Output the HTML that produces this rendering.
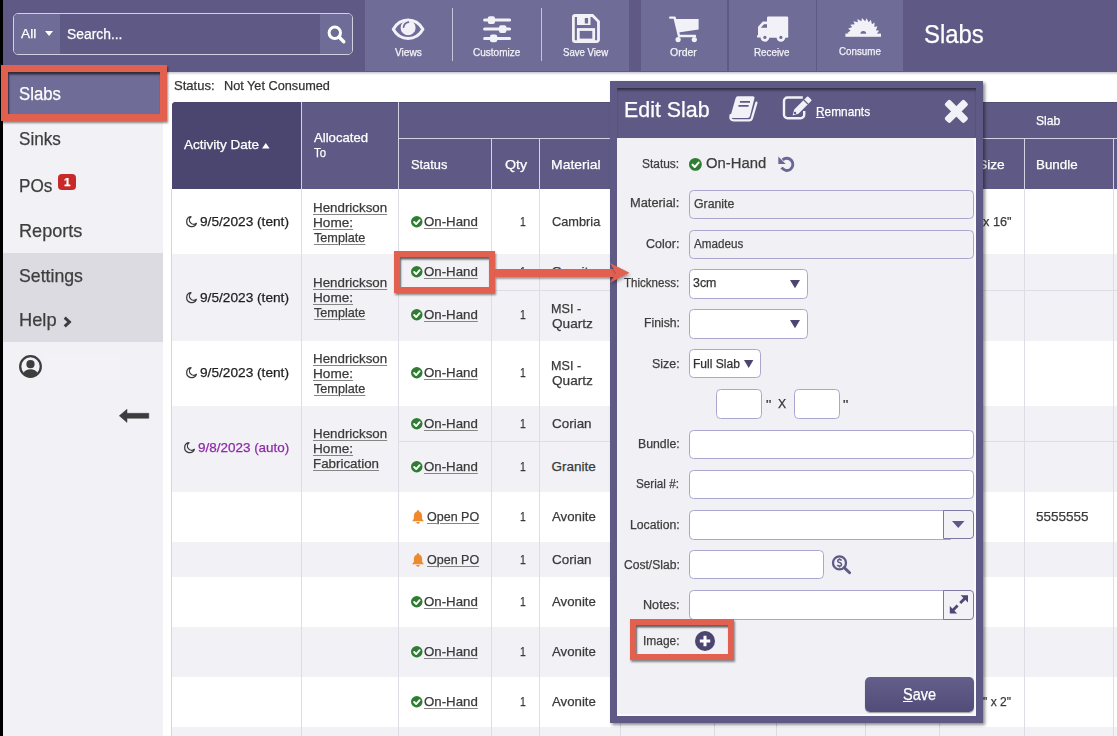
<!DOCTYPE html>
<html><head><meta charset="utf-8">
<style>
*{box-sizing:border-box}
html,body{margin:0;padding:0}
body{width:1117px;height:736px;overflow:hidden;position:relative;background:#fff;font-family:"Liberation Sans",sans-serif;color:#3a3a3a}
.a{position:absolute}
.t{white-space:nowrap;line-height:1;transform-origin:0 0}
svg{display:block;overflow:visible}
.lk{text-decoration:underline;text-underline-offset:2px;text-decoration-thickness:1.4px;text-decoration-color:#858585}
.t{-webkit-text-stroke:0.25px currentColor}
.hl{box-shadow:0.5px 2px 2px rgba(0,0,0,.45),inset 1px 2.5px 2px rgba(0,0,0,.6)}
.inp{border:1.5px solid #aaa7cf;border-radius:4px;background:#fff}
.dis{background:#efeef3}
</style></head>
<body>
<div class="a" style="left:0px;top:71px;width:1117px;height:4px;background:linear-gradient(rgba(40,38,70,.35),rgba(40,38,70,0));"></div>
<div class="a" style="left:0px;top:0px;width:1117px;height:71.5px;background:#5e5a85;"></div>
<div class="a" style="left:13px;top:13px;width:340px;height:42px;border:1.6px solid #d2d0e2;border-radius:5px;overflow:hidden;background:#5e5a85"><div class="a" style="left:0;top:0;width:45.5px;height:40px;background:#6f6c97"></div><div class="a" style="left:305.5px;top:0;width:34px;height:40px;background:#6f6c97"></div></div>
<div class="a t" style="left:20.67px;top:27.19px;font-size:13px;color:#fff;transform:scaleX(1.055);">All</div>
<svg class="a" style="left:44.6px;top:30.8px;" width="8.1" height="5" viewBox="0 0 8 5"><path d="M0 0H8L4 5Z" fill="#fff"/></svg>
<div class="a t" style="left:67.17px;top:27.45px;font-size:14.7px;color:#fff;transform:scaleX(0.943);">Search...</div>
<svg class="a" style="left:326.5px;top:24.8px;" width="19" height="19" viewBox="0 0 19 19"><circle cx="7.8" cy="7.8" r="5.7" fill="none" stroke="#fff" stroke-width="3"/><path d="M12 12L16.8 16.8" stroke="#fff" stroke-width="3.4" stroke-linecap="round"/></svg>
<div class="a" style="left:365px;top:0px;width:264px;height:71px;background:#6f6c97;"></div>
<div class="a" style="left:452px;top:8px;width:1px;height:53px;background:#c5c3da;"></div>
<div class="a" style="left:541px;top:8px;width:1px;height:53px;background:#c5c3da;"></div>
<svg class="a" style="left:386px;top:12px;" width="44" height="34" viewBox="0 0 44 34"><path d="M7.3 17.2C11 10.3 16 7.9 22.1 7.9S33.2 10.3 36.9 17.2C33.2 24.1 28.2 26.4 22.1 26.4S11 24.1 7.3 17.2Z" fill="none" stroke="#f2f1f7" stroke-width="3" stroke-linejoin="round"/><circle cx="22.1" cy="15.7" r="7.5" fill="#f2f1f7"/><path d="M17.6 15.2Q17.9 11.2 22.5 10.2" stroke="#6f6c97" stroke-width="1.7" fill="none" stroke-linecap="round"/></svg>
<div class="a t" style="left:394.66px;top:47.76px;font-size:10.2px;color:#f3f2f8;transform:scaleX(0.993);">Views</div>
<svg class="a" style="left:476px;top:10px;" width="44" height="36" viewBox="0 0 44 36"><g stroke="#f2f1f7" stroke-width="3" stroke-linecap="round"><path d="M8.6 10H33.6M8.6 19.1H33.6M8.6 28.4H33.6"/></g><g fill="#f2f1f7"><rect x="11.8" y="6.3" width="7.2" height="7.6" rx="2"/><rect x="23" y="15.3" width="7.4" height="7.6" rx="2"/><rect x="14" y="24.6" width="7.2" height="7.6" rx="2"/></g></svg>
<div class="a t" style="left:473.09px;top:47.76px;font-size:10.2px;color:#f3f2f8;transform:scaleX(0.983);">Customize</div>
<svg class="a" style="left:572px;top:13.5px;" width="28" height="29" viewBox="0 0 28 29"><path d="M3.2 1.5H20.5L26.5 7.5V25.8A1.8 1.8 0 0 1 24.7 27.6H3.2A1.8 1.8 0 0 1 1.4 25.8V3.3A1.8 1.8 0 0 1 3.2 1.5Z" fill="none" stroke="#f2f1f7" stroke-width="2.8"/><rect x="5" y="2.5" width="13.5" height="8.5" fill="#f2f1f7"/><rect x="12.8" y="4" width="3.3" height="5.5" fill="#6f6c97"/><rect x="6.3" y="15.5" width="15.4" height="10.5" fill="none" stroke="#f2f1f7" stroke-width="2.8"/></svg>
<div class="a t" style="left:562.96px;top:47.76px;font-size:10.2px;color:#f3f2f8;transform:scaleX(0.940);">Save View</div>
<div class="a" style="left:641px;top:0px;width:86px;height:71px;background:#6f6c97;"></div>
<div class="a" style="left:729px;top:0px;width:87px;height:71px;background:#6f6c97;"></div>
<div class="a" style="left:817px;top:0px;width:86px;height:71px;background:#6f6c97;"></div>
<svg class="a" style="left:664px;top:12px;" width="40" height="34" viewBox="0 0 40 34"><path d="M6.2 5.6H10.6L15 24H31" fill="none" stroke="#f2f1f7" stroke-width="2.4" stroke-linecap="round" stroke-linejoin="round"/><path d="M11.2 7H34.6V17.4L14.4 20.4Z" fill="#f2f1f7"/><circle cx="14.1" cy="27.6" r="2.6" fill="#f2f1f7"/><circle cx="30.3" cy="27.6" r="2.6" fill="#f2f1f7"/></svg>
<div class="a t" style="left:670.30px;top:47.76px;font-size:10.2px;color:#f3f2f8;transform:scaleX(1.031);">Order</div>
<svg class="a" style="left:752px;top:12px;" width="40" height="34" viewBox="0 0 40 34"><rect x="15" y="4.4" width="21.2" height="21" rx="1.2" fill="#f2f1f7"/><path d="M6 14.8L10.8 9.5H16V25H6Z" fill="#f2f1f7"/><rect x="5" y="23" width="31.2" height="2.6" rx="1.2" fill="#f2f1f7"/><path d="M8.8 15.8L12 12.2H15V15.8Z" fill="#6f6c97"/><circle cx="12.9" cy="25.4" r="4.3" fill="#f2f1f7"/><circle cx="28.9" cy="25.4" r="4.3" fill="#f2f1f7"/><circle cx="12.9" cy="25.4" r="1.6" fill="#6f6c97"/><circle cx="28.9" cy="25.4" r="1.6" fill="#6f6c97"/></svg>
<div class="a t" style="left:754.00px;top:47.76px;font-size:10.2px;color:#f3f2f8;transform:scaleX(0.962);">Receive</div>
<svg class="a" style="left:838px;top:12px;" width="50" height="30" viewBox="0 0 50 30"><path d="M12.10 22.20 L9.13 21.28 L12.63 18.48 L10.04 16.76 L14.20 15.06 L12.19 12.68 L16.66 12.22 L15.41 9.37 L19.82 10.19 L19.42 7.10 L23.42 9.13 L23.91 6.06 L27.18 9.13 L28.52 6.32 L30.78 10.19 L32.86 7.87 L33.94 12.22 L36.59 10.58 L36.40 15.06 L39.41 14.23 L37.97 18.48 L41.08 18.53 L38.50 22.20Z" fill="#f2f1f7"/><rect x="7.4" y="21.6" width="35.6" height="3.2" fill="#f2f1f7"/><path d="M22.4 21.8A2.9 2.9 0 0 1 28.2 21.8Z" fill="#6f6c97"/></svg>
<div class="a t" style="left:838.50px;top:47.36px;font-size:10.2px;color:#f3f2f8;transform:scaleX(0.961);">Consume</div>
<div class="a t" style="left:924.42px;top:21.49px;font-size:26px;color:#fff;transform:scaleX(0.919);">Slabs</div>
<div class="a" style="left:3px;top:71px;width:160px;height:665px;background:#f2f1f6;"></div>
<div class="a" style="left:3px;top:253px;width:160px;height:89px;background:#dcdbe2;"></div>
<div class="a" style="left:0px;top:0px;width:3px;height:736px;background:#000;"></div>
<div class="a hl" style="left:1px;top:65.2px;width:166px;height:56px;border:7px solid #e2604f;background:#6f6c97"></div>
<div class="a t" style="left:18.84px;top:85.48px;font-size:18.8px;color:#fff;transform:scaleX(0.892);">Slabs</div>
<div class="a t" style="left:19.02px;top:130.44px;font-size:18.5px;color:#3d3d3d;transform:scaleX(0.924);">Sinks</div>
<div class="a t" style="left:19.29px;top:176.64px;font-size:18.5px;color:#3d3d3d;transform:scaleX(0.926);">POs</div>
<div class="a" style="left:58px;top:173.6px;width:18px;height:16.3px;background:#c82a2a;border-radius:4px"></div>
<div class="a t" style="left:63.62px;top:177.41px;font-size:10.5px;color:#fff;transform:scaleX(1.104);font-weight:bold">1</div>
<div class="a t" style="left:18.71px;top:221.74px;font-size:18.5px;color:#3d3d3d;transform:scaleX(0.979);">Reports</div>
<div class="a t" style="left:19.20px;top:267.34px;font-size:18.5px;color:#3d3d3d;transform:scaleX(0.957);">Settings</div>
<div class="a t" style="left:18.70px;top:310.94px;font-size:18.5px;color:#3d3d3d;transform:scaleX(0.987);">Help</div>
<svg class="a" style="left:62.6px;top:315.8px;" width="9" height="12" viewBox="0 0 9 12"><path d="M1.7 1.6L6.4 6L1.7 10.4" fill="none" stroke="#3d3d3d" stroke-width="3"/></svg>
<div class="a" style="left:45px;top:354.4px;width:75px;height:23.6px;background:#f3f2f7;"></div>
<svg class="a" style="left:18.6px;top:354.8px;" width="23" height="23" viewBox="0 0 23 23"><circle cx="11.5" cy="11.5" r="10.3" fill="none" stroke="#3d3d3d" stroke-width="2.3"/><circle cx="11.5" cy="9.2" r="4.1" fill="#3d3d3d"/><path d="M4.3 18.6C5.6 15.4 8.2 14.3 11.5 14.3S17.4 15.4 18.7 18.6A10.2 10.2 0 0 1 4.3 18.6Z" fill="#3d3d3d"/></svg>
<svg class="a" style="left:118.5px;top:409.3px;" width="30" height="13.6" viewBox="0 0 30 13.6"><path d="M0.3 6.8L8 0.2V4.3H29.8V9.3H8V13.4Z" fill="#3d3d3d" stroke="#3d3d3d" stroke-width="0.5" stroke-linejoin="round"/></svg>
<div class="a t" style="left:174.01px;top:79.04px;font-size:13.3px;color:#333;transform:scaleX(0.980);">Status:</div>
<div class="a t" style="left:224.06px;top:79.04px;font-size:13.3px;color:#333;transform:scaleX(0.955);">Not Yet Consumed</div>
<div class="a" style="left:171px;top:189px;width:946px;height:547px;background:#fff;border-left:1px solid #d6d5de"></div>
<div class="a" style="left:172px;top:254px;width:945px;height:87px;background:#f2f1f6;"></div>
<div class="a" style="left:172px;top:406px;width:945px;height:86px;background:#f2f1f6;"></div>
<div class="a" style="left:172px;top:542px;width:945px;height:35px;background:#f2f1f6;"></div>
<div class="a" style="left:172px;top:627px;width:945px;height:50px;background:#f2f1f6;"></div>
<div class="a" style="left:172px;top:727px;width:945px;height:9px;background:#f2f1f6;"></div>
<div class="a" style="left:399px;top:290px;width:718px;height:1px;background:#dedde6;"></div>
<div class="a" style="left:399px;top:441px;width:718px;height:1px;background:#dedde6;"></div>
<div class="a" style="left:301px;top:189px;width:1px;height:547px;background:#dedde6;"></div>
<div class="a" style="left:398px;top:189px;width:1px;height:547px;background:#dedde6;"></div>
<div class="a" style="left:491px;top:189px;width:1px;height:547px;background:#dedde6;"></div>
<div class="a" style="left:539px;top:189px;width:1px;height:547px;background:#dedde6;"></div>
<div class="a" style="left:620px;top:189px;width:1px;height:547px;background:#dedde6;"></div>
<div class="a" style="left:714px;top:189px;width:1px;height:547px;background:#dedde6;"></div>
<div class="a" style="left:776px;top:189px;width:1px;height:547px;background:#dedde6;"></div>
<div class="a" style="left:865px;top:189px;width:1px;height:547px;background:#dedde6;"></div>
<div class="a" style="left:939px;top:189px;width:1px;height:547px;background:#dedde6;"></div>
<div class="a" style="left:1024px;top:189px;width:1px;height:547px;background:#dedde6;"></div>
<div class="a" style="left:1113px;top:189px;width:1px;height:547px;background:#dedde6;"></div>
<div class="a" style="left:172px;top:102px;width:945px;height:87px;background:#5e5a85;border-top-left-radius:3.5px;box-shadow:inset 0 1px 0 rgba(0,0,0,.12)"></div>
<div class="a" style="left:172px;top:102px;width:129px;height:87px;background:#4a466f;border-top-left-radius:4px"></div>
<div class="a" style="left:301px;top:102px;width:1px;height:87px;background:#d3d1e3;"></div>
<div class="a" style="left:398px;top:102px;width:1px;height:87px;background:#d3d1e3;"></div>
<div class="a" style="left:398px;top:138px;width:719px;height:1px;background:#d3d1e3;"></div>
<div class="a" style="left:491px;top:138px;width:1px;height:51px;background:#d3d1e3;"></div>
<div class="a" style="left:539px;top:138px;width:1px;height:51px;background:#d3d1e3;"></div>
<div class="a" style="left:1024px;top:138px;width:1px;height:51px;background:#d3d1e3;"></div>
<div class="a" style="left:1113px;top:138px;width:1px;height:51px;background:#d3d1e3;"></div>
<div class="a t" style="left:184.27px;top:138.49px;font-size:13px;color:#fff;transform:scaleX(1.040);">Activity Date</div>
<svg class="a" style="left:261.8px;top:142.9px;" width="7.6" height="5.4" viewBox="0 0 7.6 5.4"><path d="M0 5.4H7.6L3.8 0Z" fill="#fff"/></svg>
<div class="a t" style="left:314.27px;top:131.49px;font-size:13px;color:#fff;transform:scaleX(1.011);">Allocated</div>
<div class="a t" style="left:314.05px;top:146.19px;font-size:13px;color:#fff;transform:scaleX(0.872);">To</div>
<div class="a t" style="left:411.22px;top:157.79px;font-size:13px;color:#fff;transform:scaleX(0.986);">Status</div>
<div class="a t" style="left:504.62px;top:157.79px;font-size:13px;color:#fff;transform:scaleX(1.098);">Qty</div>
<div class="a t" style="left:551.05px;top:157.79px;font-size:13px;color:#fff;transform:scaleX(1.074);">Material</div>
<div class="a t" style="left:977.68px;top:157.59px;font-size:13px;color:#fff;transform:scaleX(1.057);">Size</div>
<div class="a t" style="left:1035.80px;top:157.59px;font-size:13px;color:#fff;transform:scaleX(1.027);">Bundle</div>
<div class="a t" style="left:1035.55px;top:114.29px;font-size:13px;color:#fff;transform:scaleX(0.936);">Slab</div>
<svg class="a" style="left:186px;top:216.4px;" width="11" height="11.2" viewBox="0 0 11 11.2"><path d="M5 0.7A5 5 0 1 0 10.4 7.3A4.1 4.1 0 0 1 5 0.7Z" fill="none" stroke="#3a3a3a" stroke-width="1.25" stroke-linejoin="round"/></svg>
<div class="a t" style="left:199.86px;top:215.37px;font-size:13.5px;color:#1e1e1e;transform:scaleX(1.013);">9/5/2023 (tent)</div>
<div class="a t" style="left:313.21px;top:200.57px;font-size:13.5px;color:#3a3a3a;transform:scaleX(0.988);"><span class="lk">Hendrickson</span></div>
<div class="a t" style="left:313.18px;top:215.57px;font-size:13.5px;color:#3a3a3a;transform:scaleX(1.007);"><span class="lk">Home:</span></div>
<div class="a t" style="left:314.02px;top:230.57px;font-size:13.5px;color:#3a3a3a;transform:scaleX(0.937);"><span class="lk">Template</span></div>
<svg class="a" style="left:411.35px;top:216.25px;" width="11.5" height="11.5" viewBox="0 0 11.5 11.5"><circle cx="5.75" cy="5.75" r="5.75" fill="#2f7d32"/><path d="M3.1625 6.0375000000000005L5.175 8.049999999999999L8.625 4.14" fill="none" stroke="#fff" stroke-width="1.8975000000000002" stroke-linecap="round" stroke-linejoin="round"/></svg>
<div class="a t" style="left:424.37px;top:215.37px;font-size:13.5px;color:#3a3a3a;transform:scaleX(0.982);"><span class="lk">On-Hand</span></div>
<div class="a t" style="left:520.20px;top:215.37px;font-size:13.5px;color:#3a3a3a;transform:scaleX(0.773);">1</div>
<div class="a t" style="left:551.55px;top:215.37px;font-size:13.5px;color:#3a3a3a;transform:scaleX(0.946);">Cambria</div>
<div class="a t" style="left:983.36px;top:215.37px;font-size:13.5px;color:#3a3a3a;transform:scaleX(0.943);">x 16&quot;</div>
<svg class="a" style="left:186px;top:291.59999999999997px;" width="11" height="11.2" viewBox="0 0 11 11.2"><path d="M5 0.7A5 5 0 1 0 10.4 7.3A4.1 4.1 0 0 1 5 0.7Z" fill="none" stroke="#3a3a3a" stroke-width="1.25" stroke-linejoin="round"/></svg>
<div class="a t" style="left:199.86px;top:290.57px;font-size:13.5px;color:#1e1e1e;transform:scaleX(1.013);">9/5/2023 (tent)</div>
<div class="a t" style="left:313.21px;top:276.07px;font-size:13.5px;color:#3a3a3a;transform:scaleX(0.988);"><span class="lk">Hendrickson</span></div>
<div class="a t" style="left:313.18px;top:291.07px;font-size:13.5px;color:#3a3a3a;transform:scaleX(1.007);"><span class="lk">Home:</span></div>
<div class="a t" style="left:314.02px;top:306.07px;font-size:13.5px;color:#3a3a3a;transform:scaleX(0.937);"><span class="lk">Template</span></div>
<svg class="a" style="left:411.35px;top:266.25px;" width="11.5" height="11.5" viewBox="0 0 11.5 11.5"><circle cx="5.75" cy="5.75" r="5.75" fill="#2f7d32"/><path d="M3.1625 6.0375000000000005L5.175 8.049999999999999L8.625 4.14" fill="none" stroke="#fff" stroke-width="1.8975000000000002" stroke-linecap="round" stroke-linejoin="round"/></svg>
<div class="a t" style="left:424.37px;top:265.37px;font-size:13.5px;color:#3a3a3a;transform:scaleX(0.982);"><span class="lk">On-Hand</span></div>
<div class="a t" style="left:520.20px;top:265.37px;font-size:13.5px;color:#3a3a3a;transform:scaleX(0.773);">1</div>
<div class="a t" style="left:551.52px;top:265.37px;font-size:13.5px;color:#3a3a3a;transform:scaleX(1.000);">Granite</div>
<svg class="a" style="left:411.35px;top:309.25px;" width="11.5" height="11.5" viewBox="0 0 11.5 11.5"><circle cx="5.75" cy="5.75" r="5.75" fill="#2f7d32"/><path d="M3.1625 6.0375000000000005L5.175 8.049999999999999L8.625 4.14" fill="none" stroke="#fff" stroke-width="1.8975000000000002" stroke-linecap="round" stroke-linejoin="round"/></svg>
<div class="a t" style="left:424.37px;top:308.37px;font-size:13.5px;color:#3a3a3a;transform:scaleX(0.982);"><span class="lk">On-Hand</span></div>
<div class="a t" style="left:520.20px;top:308.37px;font-size:13.5px;color:#3a3a3a;transform:scaleX(0.773);">1</div>
<div class="a t" style="left:551.17px;top:301.77px;font-size:13.5px;color:#3a3a3a;transform:scaleX(0.933);">MSI -</div>
<div class="a t" style="left:551.56px;top:317.17px;font-size:13.5px;color:#3a3a3a;transform:scaleX(1.008);">Quartz</div>
<svg class="a" style="left:186px;top:367.0px;" width="11" height="11.2" viewBox="0 0 11 11.2"><path d="M5 0.7A5 5 0 1 0 10.4 7.3A4.1 4.1 0 0 1 5 0.7Z" fill="none" stroke="#3a3a3a" stroke-width="1.25" stroke-linejoin="round"/></svg>
<div class="a t" style="left:199.86px;top:365.97px;font-size:13.5px;color:#1e1e1e;transform:scaleX(1.013);">9/5/2023 (tent)</div>
<div class="a t" style="left:313.21px;top:351.77px;font-size:13.5px;color:#3a3a3a;transform:scaleX(0.988);"><span class="lk">Hendrickson</span></div>
<div class="a t" style="left:313.18px;top:366.77px;font-size:13.5px;color:#3a3a3a;transform:scaleX(1.007);"><span class="lk">Home:</span></div>
<div class="a t" style="left:314.02px;top:381.77px;font-size:13.5px;color:#3a3a3a;transform:scaleX(0.937);"><span class="lk">Template</span></div>
<svg class="a" style="left:411.35px;top:366.75px;" width="11.5" height="11.5" viewBox="0 0 11.5 11.5"><circle cx="5.75" cy="5.75" r="5.75" fill="#2f7d32"/><path d="M3.1625 6.0375000000000005L5.175 8.049999999999999L8.625 4.14" fill="none" stroke="#fff" stroke-width="1.8975000000000002" stroke-linecap="round" stroke-linejoin="round"/></svg>
<div class="a t" style="left:424.37px;top:365.87px;font-size:13.5px;color:#3a3a3a;transform:scaleX(0.982);"><span class="lk">On-Hand</span></div>
<div class="a t" style="left:520.20px;top:365.87px;font-size:13.5px;color:#3a3a3a;transform:scaleX(0.773);">1</div>
<div class="a t" style="left:551.17px;top:358.67px;font-size:13.5px;color:#3a3a3a;transform:scaleX(0.933);">MSI -</div>
<div class="a t" style="left:551.56px;top:373.87px;font-size:13.5px;color:#3a3a3a;transform:scaleX(1.008);">Quartz</div>
<svg class="a" style="left:184.3px;top:442.4px;" width="11" height="11.2" viewBox="0 0 11 11.2"><path d="M5 0.7A5 5 0 1 0 10.4 7.3A4.1 4.1 0 0 1 5 0.7Z" fill="none" stroke="#3a3a3a" stroke-width="1.25" stroke-linejoin="round"/></svg>
<div class="a t" style="left:197.77px;top:441.37px;font-size:13.5px;color:#8e2aa8;transform:scaleX(0.997);">9/8/2023 (auto)</div>
<div class="a t" style="left:313.21px;top:426.87px;font-size:13.5px;color:#3a3a3a;transform:scaleX(0.988);"><span class="lk">Hendrickson</span></div>
<div class="a t" style="left:313.18px;top:441.87px;font-size:13.5px;color:#3a3a3a;transform:scaleX(1.007);"><span class="lk">Home:</span></div>
<div class="a t" style="left:313.21px;top:456.87px;font-size:13.5px;color:#3a3a3a;transform:scaleX(0.988);"><span class="lk">Fabrication</span></div>
<svg class="a" style="left:411.35px;top:417.85px;" width="11.5" height="11.5" viewBox="0 0 11.5 11.5"><circle cx="5.75" cy="5.75" r="5.75" fill="#2f7d32"/><path d="M3.1625 6.0375000000000005L5.175 8.049999999999999L8.625 4.14" fill="none" stroke="#fff" stroke-width="1.8975000000000002" stroke-linecap="round" stroke-linejoin="round"/></svg>
<div class="a t" style="left:424.37px;top:416.97px;font-size:13.5px;color:#3a3a3a;transform:scaleX(0.982);"><span class="lk">On-Hand</span></div>
<div class="a t" style="left:520.20px;top:416.97px;font-size:13.5px;color:#3a3a3a;transform:scaleX(0.773);">1</div>
<div class="a t" style="left:551.52px;top:416.97px;font-size:13.5px;color:#3a3a3a;transform:scaleX(0.995);">Corian</div>
<svg class="a" style="left:411.35px;top:461.05px;" width="11.5" height="11.5" viewBox="0 0 11.5 11.5"><circle cx="5.75" cy="5.75" r="5.75" fill="#2f7d32"/><path d="M3.1625 6.0375000000000005L5.175 8.049999999999999L8.625 4.14" fill="none" stroke="#fff" stroke-width="1.8975000000000002" stroke-linecap="round" stroke-linejoin="round"/></svg>
<div class="a t" style="left:424.37px;top:460.17px;font-size:13.5px;color:#3a3a3a;transform:scaleX(0.982);"><span class="lk">On-Hand</span></div>
<div class="a t" style="left:520.20px;top:460.17px;font-size:13.5px;color:#3a3a3a;transform:scaleX(0.773);">1</div>
<div class="a t" style="left:551.52px;top:460.17px;font-size:13.5px;color:#3a3a3a;transform:scaleX(1.000);">Granite</div>
<svg class="a" style="left:411.8px;top:509.79999999999995px;" width="12" height="14" viewBox="0 0 12 14"><path d="M6 0.3C6.8 0.3 7.2 0.8 7.2 1.4C9.3 2 10.1 3.9 10.1 6V8.8L11.9 11.2H0.1L1.9 8.8V6C1.9 3.9 2.7 2 4.8 1.4C4.8 0.8 5.2 0.3 6 0.3Z" fill="#ef8a2c"/><path d="M4.2 12H7.8A1.8 1.8 0 0 1 4.2 12Z" fill="#ef8a2c"/></svg>
<div class="a t" style="left:426.91px;top:510.17px;font-size:13.5px;color:#3a3a3a;transform:scaleX(0.927);"><span class="lk">Open PO</span></div>
<div class="a t" style="left:520.20px;top:510.17px;font-size:13.5px;color:#3a3a3a;transform:scaleX(0.773);">1</div>
<div class="a t" style="left:552.17px;top:510.17px;font-size:13.5px;color:#3a3a3a;transform:scaleX(0.980);">Avonite</div>
<div class="a t" style="left:1036.46px;top:510.07px;font-size:13.5px;color:#3a3a3a;transform:scaleX(1.001);">5555555</div>
<svg class="a" style="left:411.8px;top:552.7px;" width="12" height="14" viewBox="0 0 12 14"><path d="M6 0.3C6.8 0.3 7.2 0.8 7.2 1.4C9.3 2 10.1 3.9 10.1 6V8.8L11.9 11.2H0.1L1.9 8.8V6C1.9 3.9 2.7 2 4.8 1.4C4.8 0.8 5.2 0.3 6 0.3Z" fill="#ef8a2c"/><path d="M4.2 12H7.8A1.8 1.8 0 0 1 4.2 12Z" fill="#ef8a2c"/></svg>
<div class="a t" style="left:426.91px;top:553.07px;font-size:13.5px;color:#3a3a3a;transform:scaleX(0.927);"><span class="lk">Open PO</span></div>
<div class="a t" style="left:520.20px;top:553.07px;font-size:13.5px;color:#3a3a3a;transform:scaleX(0.773);">1</div>
<div class="a t" style="left:551.52px;top:553.07px;font-size:13.5px;color:#3a3a3a;transform:scaleX(0.995);">Corian</div>
<svg class="a" style="left:411.35px;top:596.05px;" width="11.5" height="11.5" viewBox="0 0 11.5 11.5"><circle cx="5.75" cy="5.75" r="5.75" fill="#2f7d32"/><path d="M3.1625 6.0375000000000005L5.175 8.049999999999999L8.625 4.14" fill="none" stroke="#fff" stroke-width="1.8975000000000002" stroke-linecap="round" stroke-linejoin="round"/></svg>
<div class="a t" style="left:424.37px;top:595.17px;font-size:13.5px;color:#3a3a3a;transform:scaleX(0.982);"><span class="lk">On-Hand</span></div>
<div class="a t" style="left:520.20px;top:595.17px;font-size:13.5px;color:#3a3a3a;transform:scaleX(0.773);">1</div>
<div class="a t" style="left:552.17px;top:595.17px;font-size:13.5px;color:#3a3a3a;transform:scaleX(0.980);">Avonite</div>
<svg class="a" style="left:411.35px;top:646.05px;" width="11.5" height="11.5" viewBox="0 0 11.5 11.5"><circle cx="5.75" cy="5.75" r="5.75" fill="#2f7d32"/><path d="M3.1625 6.0375000000000005L5.175 8.049999999999999L8.625 4.14" fill="none" stroke="#fff" stroke-width="1.8975000000000002" stroke-linecap="round" stroke-linejoin="round"/></svg>
<div class="a t" style="left:424.37px;top:645.17px;font-size:13.5px;color:#3a3a3a;transform:scaleX(0.982);"><span class="lk">On-Hand</span></div>
<div class="a t" style="left:520.20px;top:645.17px;font-size:13.5px;color:#3a3a3a;transform:scaleX(0.773);">1</div>
<div class="a t" style="left:552.17px;top:645.17px;font-size:13.5px;color:#3a3a3a;transform:scaleX(0.980);">Avonite</div>
<svg class="a" style="left:411.35px;top:695.75px;" width="11.5" height="11.5" viewBox="0 0 11.5 11.5"><circle cx="5.75" cy="5.75" r="5.75" fill="#2f7d32"/><path d="M3.1625 6.0375000000000005L5.175 8.049999999999999L8.625 4.14" fill="none" stroke="#fff" stroke-width="1.8975000000000002" stroke-linecap="round" stroke-linejoin="round"/></svg>
<div class="a t" style="left:424.37px;top:694.87px;font-size:13.5px;color:#3a3a3a;transform:scaleX(0.982);"><span class="lk">On-Hand</span></div>
<div class="a t" style="left:520.20px;top:694.87px;font-size:13.5px;color:#3a3a3a;transform:scaleX(0.773);">1</div>
<div class="a t" style="left:552.17px;top:694.87px;font-size:13.5px;color:#3a3a3a;transform:scaleX(0.980);">Avonite</div>
<div class="a t" style="left:983.49px;top:694.77px;font-size:13.5px;color:#3a3a3a;transform:scaleX(0.894);">&quot; x 2&quot;</div>
<div class="a" style="left:610px;top:81px;width:373px;height:642px;background:#5e5a85;box-shadow:2px 2px 3px rgba(0,0,0,.45)"></div>
<div class="a" style="left:617px;top:88px;width:359px;height:628px;background:#f1f0f5;border-right:2px solid #fafafc;border-bottom:2px solid #fafafc"></div>
<div class="a" style="left:617px;top:88px;width:359px;height:50px;background:#5e5a85;box-shadow:inset 0 3px 3px -1px rgba(0,0,0,.5)"></div>
<div class="a t" style="left:623.74px;top:99.37px;font-size:22px;color:#fff;transform:scaleX(0.973);">Edit Slab</div>
<svg class="a" style="left:724px;top:92px;" width="40" height="34" viewBox="0 0 40 34"><path d="M13.8 4.3H28.6Q30.9 4.3 30.4 6.6L25.9 24.3Q25.4 26.1 23.6 26.1H8.4Q6 26.1 6.6 23.8L11.6 6.2Q12.1 4.3 13.8 4.3Z" fill="#f2f1f7"/><path d="M6.6 23.2Q5.6 28.3 9.8 28.3H25.2Q27.3 28.3 27.9 26.2L32.4 10.6" fill="none" stroke="#f2f1f7" stroke-width="2.3" stroke-linecap="round"/><path d="M15.9 9.9H26M14.4 13.9H24.6" stroke="#5e5a85" stroke-width="1.7"/></svg>
<svg class="a" style="left:778px;top:92px;" width="40" height="32" viewBox="0 0 40 32"><path d="M24.8 5.5H9.5A3.5 3.5 0 0 0 6 9V22.7A3.5 3.5 0 0 0 9.5 26.2H22.7A3.5 3.5 0 0 0 26.2 22.7V19" fill="none" stroke="#f2f1f7" stroke-width="2.4"/><path d="M16.2 17.6L29 4.8Q29.7 4.1 30.4 4.8L33.2 7.6Q33.9 8.3 33.2 9L20.4 21.8L14.6 23.4Z" fill="#f2f1f7"/><path d="M25.8 8L30 12.2" stroke="#5e5a85" stroke-width="1.2"/><circle cx="17" cy="21" r="1.2" fill="#5e5a85"/></svg>
<div class="a t" style="left:816.33px;top:104.79px;font-size:13px;color:#fff;transform:scaleX(0.913);"><span style="text-decoration:underline;text-underline-offset:0.5px;text-decoration-thickness:1.2px">R</span>emnants</div>
<svg class="a" style="left:943.9px;top:98.9px;" width="25" height="25" viewBox="0 0 25 25"><rect x="-1.35" y="8.7" width="27.4" height="7.5" rx="2" fill="#f2f1f7" transform="rotate(45 12.35 12.45)"/><rect x="-1.35" y="8.7" width="27.4" height="7.5" rx="2" fill="#f2f1f7" transform="rotate(-45 12.35 12.45)"/></svg>
<div class="a t" style="left:642.36px;top:157.94px;font-size:12px;color:#3d3d3d;transform:scaleX(0.994);">Status:</div>
<svg class="a" style="left:688.85px;top:157.5px;" width="12.8" height="12.8" viewBox="0 0 12.8 12.8"><circle cx="6.4" cy="6.4" r="6.4" fill="#2f7d32"/><path d="M3.5200000000000005 6.720000000000001L5.760000000000001 8.959999999999999L9.600000000000001 4.608" fill="none" stroke="#fff" stroke-width="2.112" stroke-linecap="round" stroke-linejoin="round"/></svg>
<div class="a t" style="left:706.20px;top:154.98px;font-size:15.5px;color:#3d3d3d;transform:scaleX(0.957);">On-Hand</div>
<svg class="a" style="left:778.4px;top:155.7px;" width="17" height="16" viewBox="0 0 17 16"><path d="M4.6 3.9A6.1 6.1 0 1 1 3.6 11.6" fill="none" stroke="#6a6696" stroke-width="2.9"/><path d="M0.3 0.5V7.9H7.7Z" fill="#6a6696"/></svg>
<div class="a t" style="left:630.35px;top:197.44px;font-size:12px;color:#3d3d3d;transform:scaleX(1.070);">Material:</div>
<div class="a" style="left:688.8px;top:189.5px;width:285.2px;height:29.5px;border:1.5px solid #aaa7cf;border-radius:4.5px;background:#f1f0f4;"></div>
<div class="a t" style="left:694.18px;top:197.54px;font-size:12px;color:#3d3d3d;transform:scaleX(1.026);">Granite</div>
<div class="a t" style="left:646.16px;top:237.84px;font-size:12px;color:#3d3d3d;transform:scaleX(1.043);">Color:</div>
<div class="a" style="left:688.8px;top:229.5px;width:285.2px;height:29px;border:1.5px solid #aaa7cf;border-radius:4.5px;background:#f1f0f4;"></div>
<div class="a t" style="left:694.38px;top:237.84px;font-size:12px;color:#3d3d3d;transform:scaleX(0.971);">Amadeus</div>
<div class="a t" style="left:624.24px;top:277.44px;font-size:12px;color:#3d3d3d;transform:scaleX(0.963);">Thickness:</div>
<div class="a" style="left:689px;top:269.3px;width:119px;height:29.5px;border:1.5px solid #aaa7cf;border-radius:4.5px;background:#fff;"></div>
<div class="a t" style="left:693.23px;top:277.14px;font-size:12px;color:#333;transform:scaleX(1.032);">3cm</div>
<svg class="a" style="left:790.3px;top:279.5px;" width="10" height="8.2" viewBox="0 0 10 8.2"><path d="M0 0H10L5.0 8.2Z" fill="#4a4670"/></svg>
<div class="a t" style="left:643.50px;top:317.44px;font-size:12px;color:#3d3d3d;transform:scaleX(1.019);">Finish:</div>
<div class="a" style="left:689px;top:309.3px;width:119px;height:29.5px;border:1.5px solid #aaa7cf;border-radius:4.5px;background:#fff;"></div>
<svg class="a" style="left:790.3px;top:319.5px;" width="10" height="8.2" viewBox="0 0 10 8.2"><path d="M0 0H10L5.0 8.2Z" fill="#4a4670"/></svg>
<div class="a t" style="left:651.94px;top:357.64px;font-size:12px;color:#3d3d3d;transform:scaleX(1.034);">Size:</div>
<div class="a" style="left:688.8px;top:349.3px;width:72px;height:29.2px;border:1.5px solid #aaa7cf;border-radius:4.5px;background:#fff;"></div>
<div class="a t" style="left:693.11px;top:357.94px;font-size:12px;color:#333;transform:scaleX(1.004);">Full Slab</div>
<svg class="a" style="left:743.6px;top:360.2px;" width="9.4" height="7.9" viewBox="0 0 9.4 7.9"><path d="M0 0H9.4L4.7 7.9Z" fill="#4a4670"/></svg>
<div class="a" style="left:716.2px;top:389.4px;width:46.2px;height:29.9px;border:1.5px solid #aaa7cf;border-radius:4.5px;background:#fff;"></div>
<div class="a" style="left:793.8px;top:389.4px;width:46.2px;height:29.9px;border:1.5px solid #aaa7cf;border-radius:4.5px;background:#fff;"></div>
<div class="a t" style="left:766.25px;top:398.84px;font-size:12px;color:#444;transform:scaleX(1.265);">&quot;</div>
<div class="a t" style="left:778.33px;top:398.02px;font-size:12.5px;color:#333;transform:scaleX(0.975);">X</div>
<div class="a t" style="left:843.35px;top:398.84px;font-size:12px;color:#444;transform:scaleX(1.265);">&quot;</div>
<div class="a t" style="left:637.89px;top:437.94px;font-size:12px;color:#3d3d3d;transform:scaleX(1.023);">Bundle:</div>
<div class="a" style="left:689px;top:430px;width:285px;height:28.8px;border:1.5px solid #aaa7cf;border-radius:4.5px;background:#fff;"></div>
<div class="a t" style="left:636.47px;top:477.84px;font-size:12px;color:#3d3d3d;transform:scaleX(0.977);">Serial #:</div>
<div class="a" style="left:689px;top:470px;width:285px;height:29px;border:1.5px solid #aaa7cf;border-radius:4.5px;background:#fff;"></div>
<div class="a t" style="left:629.90px;top:518.84px;font-size:12px;color:#3d3d3d;transform:scaleX(1.019);">Location:</div>
<div class="a" style="left:689px;top:510.4px;width:262px;height:29.2px;border:1.5px solid #aaa7cf;border-radius:4.5px;background:#fff;border-radius:4.5px 0 0 4.5px"></div>
<div class="a" style="left:943.3px;top:510.2px;width:30.5px;height:29.3px;border:1.4px solid #7c79a4;border-radius:0 4px 4px 0;background:#f2f1f6"></div>
<svg class="a" style="left:952.3px;top:521px;" width="12.5" height="7.1" viewBox="0 0 12.5 7.1"><path d="M0 0H12.5L6.25 7.1Z" fill="#5e5a85"/></svg>
<div class="a t" style="left:623.69px;top:558.84px;font-size:12px;color:#3d3d3d;transform:scaleX(1.008);">Cost/Slab:</div>
<div class="a" style="left:689px;top:550.3px;width:134.5px;height:29.2px;border:1.5px solid #aaa7cf;border-radius:4.5px;background:#fff;"></div>
<svg class="a" style="left:831px;top:555px;" width="20" height="19" viewBox="0 0 20 19"><circle cx="8.5" cy="7.9" r="6.5" fill="none" stroke="#5e5a85" stroke-width="2.3"/><path d="M13.2 12.6L18.6 17.8" stroke="#5e5a85" stroke-width="2.9" stroke-linecap="round"/><path d="M10.6 5.6Q10 4.5 8.5 4.5Q6.7 4.5 6.7 5.9Q6.7 7 8.5 7.5Q10.5 8 10.5 9.4Q10.5 11 8.5 11Q6.9 11 6.3 9.8M8.5 3.2V4.6M8.5 11V12.5" fill="none" stroke="#5e5a85" stroke-width="1.5"/></svg>
<div class="a t" style="left:643.06px;top:598.84px;font-size:12px;color:#3d3d3d;transform:scaleX(1.052);">Notes:</div>
<div class="a" style="left:689px;top:590.2px;width:262px;height:29.4px;border:1.5px solid #aaa7cf;border-radius:4.5px;background:#fff;border-radius:4.5px 0 0 4.5px"></div>
<div class="a" style="left:943.3px;top:590px;width:30.5px;height:29.6px;border:1.4px solid #7c79a4;border-radius:0 4px 4px 0;background:#f2f1f6"></div>
<svg class="a" style="left:948px;top:594px;" width="22" height="22" viewBox="0 0 22 22"><path d="M12.6 1.2H20V8.6Z M1.8 19.4V12L9.2 19.4Z" fill="#4d4976"/><path d="M17.2 4L12.2 9M4.6 16.6L9.6 11.6" stroke="#4d4976" stroke-width="2.8"/></svg>
<div class="a hl" style="left:630px;top:619.3px;width:103.7px;height:41.2px;border:6.8px solid #e2604f;background:#f1f0f5"></div>
<div class="a t" style="left:642.90px;top:635.04px;font-size:12px;color:#3d3d3d;transform:scaleX(0.998);">Image:</div>
<svg class="a" style="left:694.5px;top:630.5px;" width="20" height="20" viewBox="0 0 20 20"><circle cx="10" cy="10" r="10" fill="#4a4670"/><path d="M10 4.8V15.2M4.8 10H15.2" stroke="#fff" stroke-width="3"/></svg>
<div class="a" style="left:865.2px;top:677px;width:108.7px;height:34.7px;border-radius:5px;background:linear-gradient(#635e8a,#514d78);box-shadow:0 1px 1px rgba(0,0,0,.35)"></div>
<div class="a t" style="left:902.84px;top:686.85px;font-size:16px;color:#fff;transform:scaleX(0.905);"><span style="text-decoration:underline;text-underline-offset:0.5px;text-decoration-thickness:1.4px">S</span>ave</div>
<div class="a hl" style="left:394.2px;top:251.2px;width:100.6px;height:41.8px;border:6.8px solid #e2604f"></div>
<div class="a" style="left:494.5px;top:268.6px;width:122px;height:8px;background:#e2604f;box-shadow:1px 2px 2px rgba(0,0,0,.35)"></div>
<svg class="a" style="left:609.5px;top:262.6px;filter:drop-shadow(1px 2px 1.5px rgba(0,0,0,.35))" width="19.5" height="19.8" viewBox="0 0 19.5 19.8"><path d="M0 0L19.5 9.7L0 19.8L6 9.9Z" fill="#e2604f"/></svg>
</body></html>
